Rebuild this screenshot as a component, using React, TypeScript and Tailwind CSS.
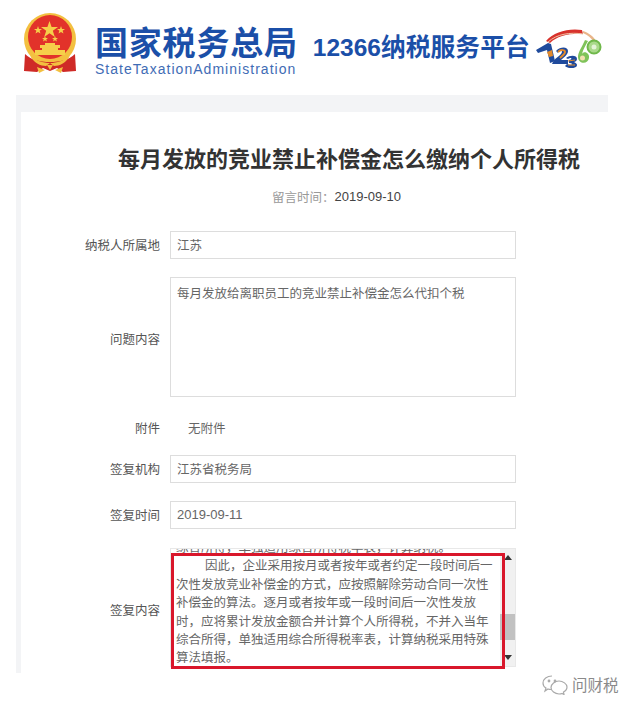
const cjk = { fontFamily: '"Noto Sans CJK SC", "Liberation Sans", sans-serif' };
const latin = { fontFamily: '"Liberation Sans", sans-serif' };

function Emblem() {
  return (
    <svg width="58" height="60" viewBox="0 0 58 60" className="shrink-0">
      <circle cx="29" cy="26" r="26" fill="#f3c040" />
      <circle cx="29" cy="24" r="22" fill="#e2322a" />
      <polygon points="28.500,8 30.600,14 37,14 31.800,17.800 33.800,24 28.500,20.200 23.200,24 25.200,17.800 20,14 26.400,14" fill="#f6cf4a" />
      <polygon points="17,13 18,16 21,16 18.600,17.800 19.500,20.600 17,19 14.500,20.600 15.400,17.800 13,16 16,16" fill="#f6cf4a" />
      <polygon points="40,13 41,16 44,16 41.600,17.800 42.500,20.600 40,19 37.500,20.600 38.400,17.800 36,16 39,16" fill="#f6cf4a" />
      <polygon points="24,23 24.800,25 27,25 25.300,26.300 25.900,28.400 24,27.200 22.100,28.400 22.700,26.300 21,25 23.200,25" fill="#f6cf4a" />
      <polygon points="34,23 34.800,25 37,25 35.300,26.300 35.900,28.400 34,27.200 32.100,28.400 32.700,26.300 31,25 33.200,25" fill="#f6cf4a" />
      <path d="M24 30h10v2H24zM19 32h20v3H19zM21 35h16v2H21zM14 37h30v5H14z" fill="#f6cf4a" />
      <path d="M4 41c6 6 15 8 25 8s19-2 25-8l1 17-13 1-6-4-7 3-7-3-6 4-13-1z" fill="#cf2a27" />
      <path d="M9 42c6 6 13 8 20 8s14-2 20-8c-3 8-11 11-16 11l-4-3-4 3c-5 0-13-3-16-11z" fill="#f3c040" />
      <path d="M16 54l8 3-6 3zM42 54l-8 3 6 3zM26 52h6l-3 5z" fill="#f3c040" />
    </svg>
  );
}

function Logo12366() {
  return (
    <svg width="68" height="40" viewBox="0 0 68 40" className="shrink-0">
      <path d="M11 13C19 4 33 0 47 2l1 4C35 5 22 8 15 15z" fill="#d8322c" />
      <path d="M13 14C22 6 35 4 48 6" fill="none" stroke="#f0c6a8" strokeWidth="1" />
      <path d="M48 3c6 2 11 6 13 10l-2 1c-3-4-6-7-11-9z" fill="#e9b58a" />
      <path d="M1 22L13 15l3 1 4 17-5 2-3-13-9 3z" fill="#1f4a9c" />
      <path d="M12 24l5-2 1 6-4 1z" fill="#e38a2b" />
      <path d="M21 23c5-5 12-4 12 0 0 4-5 7-7 9l7 0 0 4H17c2-6 9-8 10-12 0-2-3-2-4 1z" fill="#1f4a9c" />
      <path d="M23 24c3-3 7-2 7 0s-3 4-5 6" fill="none" stroke="#e38a2b" strokeWidth="2" />
      <path d="M31 30c4-3 11-3 11 1 0 2-2 3-3 3 2 1 3 2 3 3 0 4-9 4-12 1l2-2c2 1 5 1 5 0 0-1-2-1-3-1v-3c2 0 3-1 2-2-1 0-2 0-3 1z" fill="#1f4a9c" />
      <path d="M33 33l7-1M33 37l7 0" stroke="#e38a2b" strokeWidth="1" />
      <path d="M50 12c-3 7-7 12-7 17 0 7 10 8 11 1 1-5-5-8-7-4 1-5 4-9 6-13z" fill="#7fc35a" />
      <circle cx="47.500" cy="30" r="2.500" fill="#f4e0b0" />
      <circle cx="59" cy="19" r="6.500" fill="#a9d98a" stroke="#6fb84a" strokeWidth="2" />
      <circle cx="59" cy="19" r="2.500" fill="#e3f3d6" />
    </svg>
  );
}

function Label({ children }: { children: React.ReactNode }) {
  return <div className="w-[139px] shrink-0 text-right text-[12.5px] text-[#555]">{children}</div>;
}

function Field({ label, children }: { label: string; children: React.ReactNode }) {
  return (
    <div className="flex items-center">
      <Label>{label}</Label>
      <div className="ml-[10px] flex h-[28px] w-[346px] items-center border border-[#ddd] pl-[6px] text-[12.5px] text-[#666]">{children}</div>
    </div>
  );
}

export default function App() {
  return (
    <div className="relative h-[713px] w-[640px] overflow-hidden bg-white" style={cjk}>
      <header className="flex h-[95px] items-start pl-[21px] pt-[13px]">
        <Emblem />
        <div className="ml-[16px] pt-[10px]">
          <div className="text-[33px] font-bold leading-[36px] tracking-[0.8px] text-[#1b4fa8] whitespace-nowrap">国家税务总局</div>
          <div className="mt-[2px] text-[14px] leading-[16px] tracking-[1.03px] text-[#3f6cb5] whitespace-nowrap" style={latin}>StateTaxationAdministration</div>
        </div>
        <div className="ml-[15px] mt-[17px] flex items-baseline font-bold leading-[30px] text-[#1b4fa8] whitespace-nowrap">
          <span className="text-[24.500px]" style={latin}>12366</span>
          <span className="text-[24.800px]">纳税服务平台</span>
        </div>
        <div className="ml-[5px] mt-[15px]"><Logo12366 /></div>
      </header>

      <main className="ml-[16px] h-[578px] w-[592px] bg-[#f3f4f6] pl-[5px] pt-[17px]">
        <div className="h-full bg-white">
          <h1 className="pt-[30px] pl-[97px] text-[22px] font-bold leading-[30px] text-[#333] whitespace-nowrap">每月发放的竞业禁止补偿金怎么缴纳个人所得税</h1>
          <div className="mt-[15px] flex pl-[251px] text-[12.5px] leading-[20px]">
            <span className="text-[#999]">留言时间：</span>
            <span className="text-[13px] text-[#444]" style={latin}>2019-09-10</span>
          </div>

          <div className="mt-[24px] flex flex-col">
            <Field label="纳税人所属地">江苏</Field>
            <div className="mt-[18px] flex items-center">
              <div className="mt-[4px]"><Label>问题内容</Label></div>
              <div className="ml-[10px] h-[120px] w-[346px] border border-[#ddd] px-[6px] pt-[5px] text-[12.5px] leading-[20px] text-[#666]">每月发放给离职员工的竞业禁止补偿金怎么代扣个税</div>
            </div>
            <div className="mt-[21px] flex h-[20px] items-center">
              <Label>附件</Label>
              <div className="ml-[28px] text-[12.5px] text-[#666]">无附件</div>
            </div>
            <div className="mt-[17px]"><Field label="签复机构">江苏省税务局</Field></div>
            <div className="mt-[18px]"><Field label="签复时间"><span className="text-[13px]" style={latin}>2019-09-11</span></Field></div>
            <div className="mt-[19px] flex items-center">
              <div className="mt-[6px]"><Label>签复内容</Label></div>
              <div className="relative ml-[10px] flex h-[119px] w-[346px] border border-[#e8e8e8]">
                <div className="h-full w-[329px] overflow-hidden px-[5px] text-[12.5px] leading-[18.400px] text-[#666]">
                  <p className="-mt-[11px] whitespace-nowrap">综合所得，单独适用综合所得税率表，计算纳税。</p>
                  <p className="indent-[29px] whitespace-nowrap">因此，企业采用按月或者按年或者约定一段时间后一</p>
                  <p className="whitespace-nowrap">次性发放竞业补偿金的方式，应按照解除劳动合同一次性</p>
                  <p className="whitespace-nowrap">补偿金的算法。逐月或者按年或一段时间后一次性发放</p>
                  <p className="whitespace-nowrap">时，应将累计发放金额合并计算个人所得税，不并入当年</p>
                  <p className="whitespace-nowrap">综合所得，单独适用综合所得税率表，计算纳税采用特殊</p>
                  <p className="whitespace-nowrap">算法填报。</p>
                </div>
                <div className="relative h-full w-[15px] bg-[#f1f1f1]">
                  <div className="absolute left-[4px] top-[6px] h-0 w-0 border-x-[4px] border-b-[5px] border-x-transparent border-b-[#333]" />
                  <div className="absolute left-0 top-[65px] h-[26px] w-full bg-[#c1c1c1]" />
                  <div className="absolute bottom-[6px] left-[4px] h-0 w-0 border-x-[4px] border-t-[5px] border-x-transparent border-t-[#333]" />
                </div>
                <div className="absolute left-0 top-[4px] h-[116px] w-[334px] border-[3px] border-[#d9172b]" />
              </div>
            </div>
          </div>
        </div>
      </main>

      <div className="absolute left-[542px] top-[673px] flex items-center gap-[4px] text-[15.500px] text-[#8a8a8a]">
        <svg width="26" height="21" viewBox="0 0 26 21" fill="none" stroke="#a9a9a9" strokeWidth="1.2">
          <path d="M10 2C5 2 1 5 1 9c0 2 1 4 3 5l-1 3 3-2c1 .4 2 .5 3 .5" />
          <path d="M17 7c-4 0-8 3-8 6.500S13 20 17 20c1 0 2 0 3-.5l2 1-.5-2.500c2-1 3.500-3 3.500-5C25 10 21 7 17 7z" />
          <circle cx="7" cy="7" r=".8" fill="#a9a9a9" />
          <circle cx="13" cy="7" r=".8" fill="#a9a9a9" />
        </svg>
        <span>问财税</span>
      </div>
    </div>
  );
}
